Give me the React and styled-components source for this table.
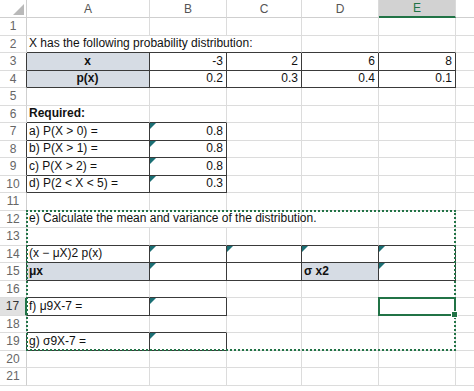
import React from 'react';
import styled, { createGlobalStyle, css } from 'styled-components';

const GRID = '#dcdcdc';
const DARK = '#3a3a3a';
const GREEN = '#217346';
const SHADE = '#d6dce4';

const GlobalStyle = createGlobalStyle`
  html, body {
    margin: 0;
    padding: 0;
    background: #fff;
    overflow: hidden;
  }
  body {
    font-family: "Liberation Sans", Arial, sans-serif;
  }
`;

const Sheet = styled.div`
  display: grid;
  grid-template-columns: 27px 123px 77px 75px 77px 77px 77px;
  grid-template-rows: 18px repeat(22, 17.5px);
  width: 474px;
  height: 391px;
  overflow: hidden;
  font-size: 12px;
  color: #111;
`;

const Corner = styled.div`
  grid-row: 1;
  grid-column: 1;
  display: flex;
  align-items: flex-end;
  justify-content: flex-end;
  padding: 0 2px 2px 0;
  border-right: 1px solid #cfcfcf;
  border-bottom: 1px solid #cfcfcf;
  &::after {
    content: '';
    border-left: 11px solid transparent;
    border-bottom: 11px solid #b9b9b9;
  }
`;

const ColHead = styled.div`
  grid-row: 1;
  grid-column: ${(p) => p.$c + 2};
  display: flex;
  align-items: center;
  justify-content: center;
  font-size: 12px;
  color: ${(p) => (p.$active ? GREEN : '#555')};
  background: ${(p) => (p.$active ? '#d2d2d2' : '#fff')};
  border-right: 1px solid #dadada;
  border-bottom: ${(p) => (p.$active ? `2px solid ${GREEN}` : '1px solid #cfcfcf')};
`;

const RowHead = styled.div`
  grid-row: ${(p) => p.$r + 1};
  grid-column: 1;
  display: flex;
  align-items: center;
  justify-content: center;
  font-size: 12px;
  color: ${(p) => (p.$active ? '#333' : '#666')};
  background: ${(p) => (p.$active ? '#e1e1e1' : '#fff')};
  border-bottom: 1px solid ${GRID};
  border-right: ${(p) =>
    p.$active ? `2px solid ${GREEN}` : `1px solid ${p.$dark ? DARK : '#cfcfcf'}`};
`;

const Cell = styled.div`
  position: relative;
  grid-row: ${(p) => p.$r + 1};
  grid-column: ${(p) => p.$c + 2} / span ${(p) => p.$span};
  display: flex;
  align-items: flex-end;
  justify-content: ${(p) =>
    p.$align === 'right' ? 'flex-end' : p.$align === 'center' ? 'center' : 'flex-start'};
  padding: 0 3px 1px 2px;
  white-space: nowrap;
  line-height: 15px;
  font-weight: ${(p) => (p.$bold ? 700 : 400)};
  background: ${(p) => (p.$shade ? SHADE : 'transparent')};
  border-right: 1px solid ${(p) => (p.$rb ? DARK : GRID)};
  border-bottom: 1px solid ${(p) => (p.$bb ? DARK : GRID)};
  ${(p) =>
    p.$flag &&
    css`
      &::before {
        content: '';
        position: absolute;
        top: 0;
        left: 0;
        border-top: 6px solid #1b6f74;
        border-right: 6px solid transparent;
      }
    `}
`;

const Marquee = styled.div`
  grid-column: 2 / 7;
  grid-row: 13 / 21;
  margin: -1px 0 0 -1px;
  border: 2px dotted ${GREEN};
  pointer-events: none;
  z-index: 2;
`;

const Selection = styled.div`
  grid-column: 6 / 7;
  grid-row: 18 / 19;
  margin: -1px 0 0 -1px;
  border: 2px solid ${GREEN};
  position: relative;
  z-index: 3;
  &::after {
    content: '';
    position: absolute;
    right: -4px;
    bottom: -4px;
    width: 5px;
    height: 5px;
    background: ${GREEN};
    border: 1px solid #fff;
  }
`;

// F is only partly in view, so its letter stays off-screen
const COLS = ['A', 'B', 'C', 'D', 'E', 'F'];
const LABELS = ['A', 'B', 'C', 'D', 'E', ''];
const ROWS = 21;
const SEL = { r: 17, c: 4 };

const num = (v) => ({ v, align: 'right' });

const data = {
  A2: { v: 'X has the following probability distribution:', span: 3 },
  A3: { v: 'x', bold: true, align: 'center', shade: true },
  B3: num('-3'),
  C3: num('2'),
  D3: num('6'),
  E3: num('8'),
  A4: { v: 'p(x)', bold: true, align: 'center', shade: true },
  B4: num('0.2'),
  C4: num('0.3'),
  D4: num('0.4'),
  E4: num('0.1'),
  A6: { v: 'Required:', bold: true },
  A7: { v: 'a) P(X > 0) =' },
  B7: { ...num('0.8'), flag: true },
  A8: { v: 'b) P(X > 1) =' },
  B8: { ...num('0.8'), flag: true },
  A9: { v: 'c) P(X > 2) =' },
  B9: { ...num('0.8'), flag: true },
  A10: { v: 'd) P(2 < X < 5) =' },
  B10: { ...num('0.3'), flag: true },
  A12: { v: 'e) Calculate the mean and variance of the distribution.', span: 3 },
  A14: { v: '(x − μX)2 p(x)' },
  B14: { flag: true },
  C14: { flag: true },
  D14: { flag: true },
  E14: { flag: true },
  A15: { v: 'μx', bold: true, shade: true },
  B15: { flag: true },
  D15: { v: 'σ x2', bold: true, shade: true },
  E15: { flag: true },
  A17: { v: 'f) μ9X-7 =' },
  B17: { flag: true },
  A19: { v: 'g) σ9X-7 =' },
  B19: { flag: true },
};

const boxes = [
  { r1: 3, r2: 4, c1: 0, c2: 4 },
  { r1: 7, r2: 10, c1: 0, c2: 1 },
  { r1: 14, r2: 15, c1: 0, c2: 4 },
  { r1: 17, r2: 17, c1: 0, c2: 1 },
  { r1: 19, r2: 19, c1: 0, c2: 1 },
];

const boxed = (r, c) =>
  boxes.some((b) => r >= b.r1 && r <= b.r2 && c >= b.c1 && c <= b.c2);

function buildRow(r) {
  const out = [];
  let c = 0;
  while (c < COLS.length) {
    const d = data[COLS[c] + r] || {};
    const span = d.span || 1;
    const last = c + span - 1;
    let bb = false;
    for (let k = c; k <= last; k++) {
      if (boxed(r, k) || boxed(r + 1, k)) bb = true;
    }
    out.push(
      <Cell
        key={COLS[c] + r}
        $r={r}
        $c={c}
        $span={span}
        $align={d.align}
        $bold={d.bold}
        $shade={d.shade}
        $flag={d.flag}
        $rb={boxed(r, last) || boxed(r, last + 1)}
        $bb={bb}
      >
        {d.v}
      </Cell>
    );
    c += span;
  }
  return out;
}

export default function App() {
  const rows = [];
  for (let r = 1; r <= ROWS; r++) {
    rows.push(
      <RowHead key={'h' + r} $r={r} $active={r === SEL.r} $dark={boxed(r, 0)}>
        {r}
      </RowHead>
    );
    rows.push(...buildRow(r));
  }

  return (
    <>
      <GlobalStyle />
      <Sheet>
        <Corner />
        {COLS.map((l, i) => (
          <ColHead key={l} $c={i} $active={i === SEL.c}>
            {LABELS[i]}
          </ColHead>
        ))}
        {rows}
        <Marquee />
        <Selection />
      </Sheet>
    </>
  );
}
